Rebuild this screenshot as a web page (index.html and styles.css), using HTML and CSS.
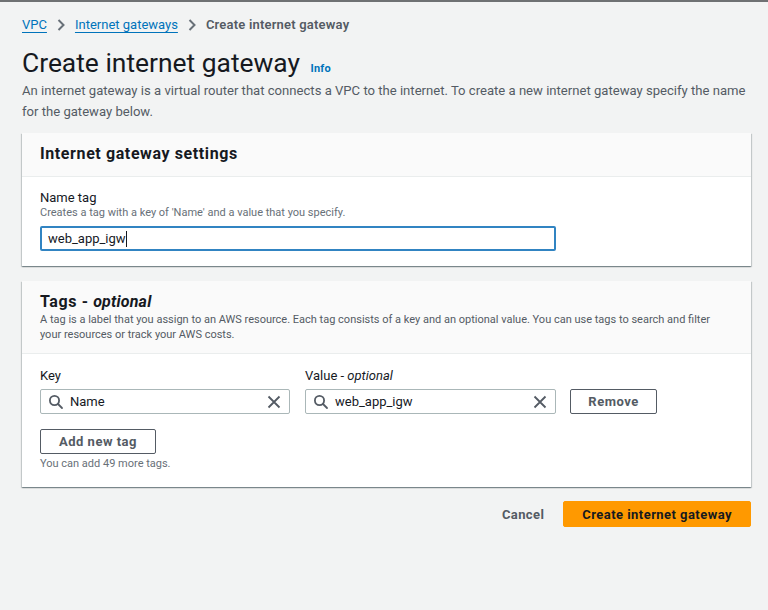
FILE: index.html
```html
<!DOCTYPE html>
<html lang="en">
<head>
<meta charset="utf-8">
<title>Create internet gateway</title>
<link rel="stylesheet" href="styles.css">
</head>
<body>
<div class="topline"></div>
<main class="page">
  <nav class="breadcrumbs">
    <a class="crumb-link" href="#">VPC</a>
    <svg class="chev" width="16" height="16" viewBox="0 0 16 16"><polyline points="5.5,3 10.5,8 5.5,13" fill="none" stroke="#687078" stroke-width="2"/></svg>
    <a class="crumb-link" href="#">Internet gateways</a>
    <svg class="chev" width="16" height="16" viewBox="0 0 16 16"><polyline points="5.5,3 10.5,8 5.5,13" fill="none" stroke="#687078" stroke-width="2"/></svg>
    <span class="crumb-current">Create internet gateway</span>
  </nav>

  <header class="page-head">
    <h1 class="title">Create internet gateway <a class="info" href="#">Info</a></h1>
    <p class="desc">An internet gateway is a virtual router that connects a VPC to the internet. To create a new internet gateway specify the name for the gateway below.</p>
  </header>

  <section class="card">
    <div class="card-head">
      <h2 class="card-title">Internet gateway settings</h2>
    </div>
    <div class="card-body body-settings">
      <div class="label">Name tag</div>
      <div class="hint">Creates a tag with a key of 'Name' and a value that you specify.</div>
      <div class="input focused">web_app_igw<span class="caret"></span></div>
    </div>
  </section>

  <section class="card">
    <div class="card-head head-tags">
      <h2 class="card-title">Tags - <i>optional</i></h2>
      <p class="card-desc">A tag is a label that you assign to an AWS resource. Each tag consists of a key and an optional value. You can use tags to search and filter your resources or track your AWS costs.</p>
    </div>
    <div class="card-body body-tags">
      <div class="tag-grid">
        <div class="label">Key</div>
        <div class="label">Value - <i>optional</i></div>
        <div></div>
        <div class="input search">
          <svg class="ico" width="16" height="16" viewBox="0 0 16 16"><circle cx="6.5" cy="6.5" r="4.6" fill="none" stroke="#545b64" stroke-width="1.8"/><line x1="10" y1="10" x2="14" y2="14" stroke="#545b64" stroke-width="1.8" stroke-linecap="round"/></svg>
          <span class="val">Name</span>
          <svg class="clear" width="16" height="16" viewBox="0 0 16 16"><path d="M2.5 2.5 L13.5 13.5 M13.5 2.5 L2.5 13.5" stroke="#545b64" stroke-width="1.8" fill="none"/></svg>
        </div>
        <div class="input search">
          <svg class="ico" width="16" height="16" viewBox="0 0 16 16"><circle cx="6.5" cy="6.5" r="4.6" fill="none" stroke="#545b64" stroke-width="1.8"/><line x1="10" y1="10" x2="14" y2="14" stroke="#545b64" stroke-width="1.8" stroke-linecap="round"/></svg>
          <span class="val">web_app_igw</span>
          <svg class="clear" width="16" height="16" viewBox="0 0 16 16"><path d="M2.5 2.5 L13.5 13.5 M13.5 2.5 L2.5 13.5" stroke="#545b64" stroke-width="1.8" fill="none"/></svg>
        </div>
        <button class="btn btn-remove" type="button">Remove</button>
      </div>
      <button class="btn btn-add" type="button">Add new tag</button>
      <div class="hint hint-count">You can add 49 more tags.</div>
    </div>
  </section>

  <div class="actions">
    <button class="btn-link" type="button">Cancel</button>
    <button class="btn-primary" type="button">Create internet gateway</button>
  </div>
</main>
</body>
</html>
```

FILE: styles.css
```css
* { box-sizing: border-box; }

html, body {
  margin: 0;
  padding: 0;
  background: #f2f3f3;
  font-family: Roboto, "Liberation Sans", Arial, sans-serif;
  color: #16191f;
}

.topline {
  height: 2px;
  background: #6f7173;
}

.page {
  padding: 0 17px 0 22px;
}

.breadcrumbs {
  display: flex;
  align-items: center;
  height: 44px;
  padding-top: 1px;
  font-size: 13px;
  gap: 6px;
}

.crumb-link {
  color: #0073bb;
  text-decoration: underline;
  text-underline-offset: 3px;
}

.chev { margin: 0; }

.crumb-current {
  color: #545b64;
  font-weight: 600;
  letter-spacing: 0.2px;
}

.page-head { margin-bottom: 11px; }

.title {
  margin: 0;
  height: 34px;
  font-size: 26.4px;
  font-weight: 400;
  line-height: 34px;
  color: #16191f;
}

.info {
  font-size: 11px;
  font-weight: 700;
  line-height: 0;
  color: #0073bb;
  text-decoration: none;
  margin-left: 4px;
  vertical-align: baseline;
  letter-spacing: 0.2px;
}

.desc {
  margin: 0;
  font-size: 13.1px;
  line-height: 21px;
  color: #545b64;
}

.card {
  background: #fff;
  box-shadow: 0 1px 1px 0 rgba(0, 28, 36, 0.3), 1px 1px 1px 0 rgba(0, 28, 36, 0.15), -1px 1px 1px 0 rgba(0, 28, 36, 0.15);
  margin-bottom: 15px;
}

.card-head {
  background: #fafafa;
  border-bottom: 1px solid #eaeded;
  padding: 11px 18px 12px;
}

.card-title {
  margin: 0;
  font-size: 16px;
  line-height: 20px;
  font-weight: 700;
  color: #16191f;
  letter-spacing: 0.6px;
}

.card-title i { letter-spacing: 0.2px; }

.card-desc {
  margin: 0;
  font-size: 11px;
  line-height: 15px;
  color: #545b64;
}

.head-tags { padding-bottom: 11px; }

.card-body { padding: 12px 18px 15px; }

.label {
  font-size: 13px;
  line-height: 17px;
  color: #16191f;
}

.hint {
  font-size: 11px;
  line-height: 14px;
  color: #687078;
}

.input {
  display: flex;
  align-items: center;
  height: 25px;
  border: 1px solid #aab7b8;
  border-radius: 2px;
  background: #fff;
  font-size: 13px;
  color: #16191f;
  padding: 0 7px;
}

.focused {
  margin-top: 6px;
  width: 516px;
  border: 2px solid #3184c2;
  padding: 0 6px;
}

.caret {
  display: inline-block;
  width: 1px;
  height: 16px;
  background: #16191f;
}

.body-tags { padding: 13px 18px 16px; }

.tag-grid {
  display: grid;
  grid-template-columns: 250px 251px 87px;
  column-gap: 15px;
  row-gap: 5px;
  align-items: center;
}

.search { gap: 6px; }
.search .val { flex: 1; }
.ico { flex: none; }
.clear { flex: none; }

.btn {
  height: 25px;
  border: 1px solid #545b64;
  border-radius: 2px;
  background: #fff;
  color: #545b64;
  font-family: inherit;
  font-size: 13px;
  font-weight: 700;
  letter-spacing: 0.5px;
  padding: 0 18px;
}

.btn-remove { width: 87px; padding: 0; margin-left: -1px; }

.btn-add {
  margin-top: 15px;
  width: 116px;
  padding: 0;
  display: block;
}

.hint-count { margin-top: 3px; }

.actions {
  display: flex;
  justify-content: flex-end;
  align-items: center;
  margin-top: -1px;
}

.btn-link {
  border: 0;
  background: none;
  font-family: inherit;
  font-size: 13px;
  font-weight: 700;
  letter-spacing: 0.4px;
  color: #545b64;
  padding: 0 19px;
  height: 26px;
}

.btn-primary {
  height: 26px;
  border: 1px solid #ff9900;
  border-radius: 2px;
  background: #ff9900;
  color: #16191f;
  font-family: inherit;
  font-size: 13px;
  font-weight: 700;
  letter-spacing: 0.45px;
  padding: 0 18px;
}
```
